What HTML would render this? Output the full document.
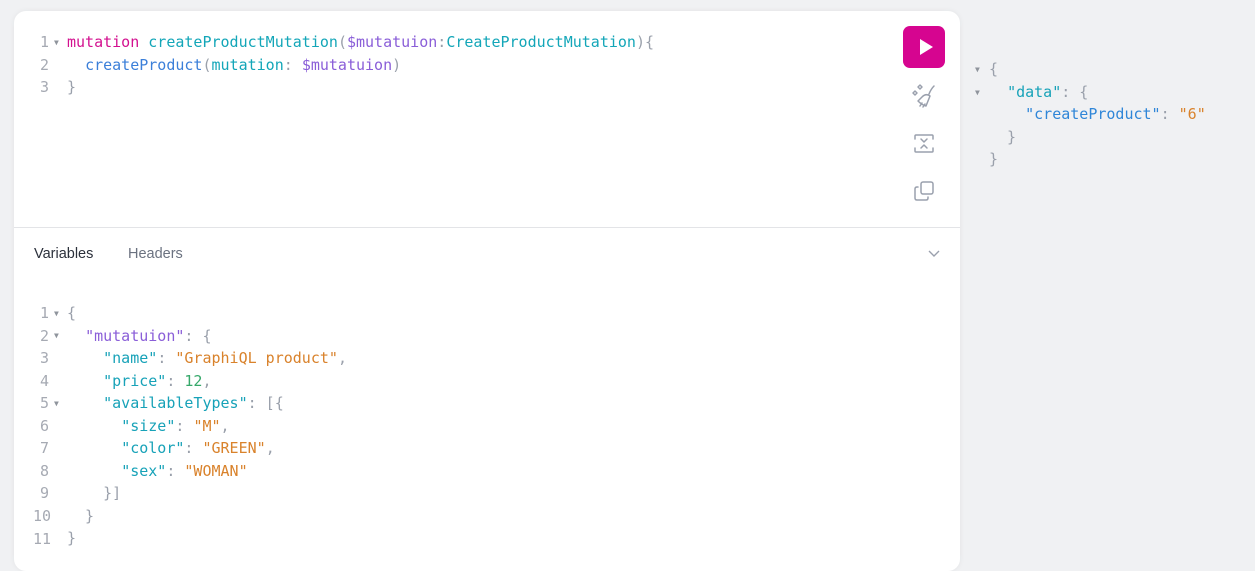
<!DOCTYPE html>
<html><head><meta charset="utf-8"><style>
*{margin:0;padding:0;box-sizing:border-box}
body{width:1255px;height:561px;background:#f0f1f3;overflow:hidden;position:relative;font-family:"DejaVu Sans Mono","Liberation Mono",monospace}
.card{position:absolute;left:14px;top:11px;width:946px;height:560px;background:#fff;border-radius:12px;box-shadow:0 0 6px rgba(0,0,0,.06)}
.sep{position:absolute;left:14px;top:227px;width:946px;height:1px;background:#e3e4e7}
.code{position:absolute;font-size:15px;line-height:22.55px;white-space:pre;color:#9aa0ab}
.ln{position:absolute;font-size:15px;line-height:22.55px;white-space:pre;color:#a6aab3;text-align:right;width:20px}
.ar{position:absolute;font-size:8px;color:#8f949c}
.k{color:#d3108f}.d{color:#13a6b8}.f{color:#3b7fd9}.v{color:#8a5ed8}.p{color:#9aa0ab}.s{color:#d9822b}.n{color:#36a86a}.key{color:#17a2b8}.rk{color:#2f86d8}
.tab{position:absolute;top:246px;font-family:"Liberation Sans",sans-serif;font-size:14.5px}
</style></head><body>
<div class="card"></div>
<div class="sep"></div>

<div class="ln" style="left:29px;top:31px">1
2
3</div>
<div class="ar" style="left:54px;top:38px">▼</div>
<div class="code" style="left:67px;top:31px"><span class="k">mutation</span> <span class="d">createProductMutation</span>(<span class="v">$mutatuion</span>:<span class="d">CreateProductMutation</span>){
  <span class="f">createProduct</span>(<span class="d">mutation</span>: <span class="v">$mutatuion</span>)
}</div>

<div style="position:absolute;left:903px;top:26px;width:42px;height:42px;background:#d60590;border-radius:7px"></div>
<svg style="position:absolute;left:903px;top:26px" width="42" height="42"><path d="M17 13 L30 21 L17 29 Z" fill="#fff"/></svg>
<svg style="position:absolute;left:910px;top:82px" width="28" height="28" fill="none" stroke="#9aa0ad" stroke-width="1.5" stroke-linecap="round" stroke-linejoin="round">
<path d="M3 11 l2-2 2 2-2 2z M8 5 l2-2 2 2-2 2z"/>
<path d="M24 4 Q21 7 19 12 M12 15 q4-4 8-1 l-4 10 q-4-1-8-5 z M10 24 l2-3 M13 25 l2-3"/>
</svg>
<svg style="position:absolute;left:912px;top:132px" width="24" height="24" fill="none" stroke="#9aa0ad" stroke-width="1.5" stroke-linecap="round" stroke-linejoin="round">
<path d="M3 7 V4 q0-1 1-1 h16 q1 0 1 1 v3 M3 16 v3 q0 1 1 1 h16 q1 0 1-1 v-3"/>
<path d="M9 7 l3 3 3-3 M9 16 l3-3 3 3"/>
</svg>
<svg style="position:absolute;left:912px;top:179px" width="24" height="24" fill="none" stroke="#9aa0ad" stroke-width="1.5" stroke-linecap="round" stroke-linejoin="round">
<rect x="9" y="3" width="12" height="12" rx="2"/>
<path d="M6 8 h-1 q-2 0-2 2 v9 q0 2 2 2 h9 q2 0 2-2 v-1"/>
</svg>

<div class="tab" style="left:34px;color:#2b303b">Variables</div>
<div class="tab" style="left:128px;color:#6b7280">Headers</div>
<svg style="position:absolute;left:927px;top:249px" width="14" height="10" fill="none" stroke="#9aa0ad" stroke-width="1.4"><path d="M2 2 L7 7 L12 2"/></svg>

<div class="ln" style="left:29px;top:302px">1
2
3
4
5
6
7
8
9</div>
<div class="ln" style="left:31px;top:505px;width:20px">10
11</div>
<div class="ar" style="left:54px;top:309px">▼</div>
<div class="ar" style="left:54px;top:331px">▼</div>
<div class="ar" style="left:54px;top:399px">▼</div>
<div class="code" style="left:67px;top:302px">{
  <span class="v">"mutatuion"</span>: {
    <span class="key">"name"</span>: <span class="s">"GraphiQL product"</span>,
    <span class="key">"price"</span>: <span class="n">12</span>,
    <span class="key">"availableTypes"</span>: [{
      <span class="key">"size"</span>: <span class="s">"M"</span>,
      <span class="key">"color"</span>: <span class="s">"GREEN"</span>,
      <span class="key">"sex"</span>: <span class="s">"WOMAN"</span>
    }]
  }
}</div>

<div class="ar" style="left:975px;top:65px">▼</div>
<div class="ar" style="left:975px;top:88px">▼</div>
<div class="code" style="left:989px;top:58px">{
  <span class="key">"data"</span>: {
    <span class="rk">"createProduct"</span>: <span class="s">"6"</span>
  }
}</div>
</body></html>
